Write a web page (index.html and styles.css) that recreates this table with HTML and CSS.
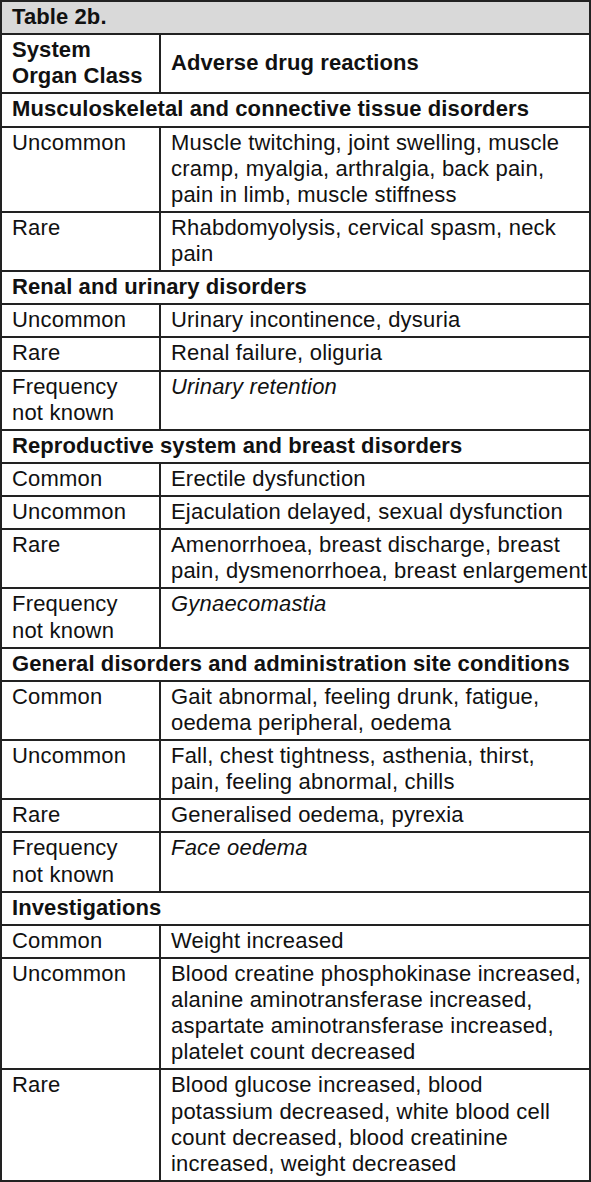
FILE: index.html
```html
<!DOCTYPE html>
<html>
<head>
<meta charset="utf-8">
<link rel="stylesheet" href="styles.css">
</head>
<body>
<table class="adr">
<colgroup><col class="c1"><col class="c2"></colgroup>
<tr class="title"><th colspan="2">Table 2b.</th></tr>
<tr class="head"><th class="cls">System Organ Class</th><th class="mid">Adverse drug reactions</th></tr>
<tr class="sec"><th colspan="2">Musculoskeletal and connective tissue disorders</th></tr>
<tr><td class="cls">Uncommon</td><td>Muscle twitching, joint swelling, muscle cramp, myalgia, arthralgia, back pain, pain in limb, muscle stiffness</td></tr>
<tr><td class="cls">Rare</td><td>Rhabdomyolysis, cervical spasm, neck pain</td></tr>
<tr class="sec"><th colspan="2">Renal and urinary disorders</th></tr>
<tr><td class="cls">Uncommon</td><td>Urinary incontinence, dysuria</td></tr>
<tr><td class="cls">Rare</td><td>Renal failure, oliguria</td></tr>
<tr><td class="cls">Frequency not known</td><td><em>Urinary retention</em></td></tr>
<tr class="sec"><th colspan="2">Reproductive system and breast disorders</th></tr>
<tr><td class="cls">Common</td><td>Erectile dysfunction</td></tr>
<tr><td class="cls">Uncommon</td><td>Ejaculation delayed, sexual dysfunction</td></tr>
<tr><td class="cls">Rare</td><td>Amenorrhoea, breast discharge, breast pain, dysmenorrhoea, breast enlargement</td></tr>
<tr><td class="cls">Frequency not known</td><td><em>Gynaecomastia</em></td></tr>
<tr class="sec"><th colspan="2">General disorders and administration site conditions</th></tr>
<tr><td class="cls">Common</td><td>Gait abnormal, feeling drunk, fatigue, oedema peripheral, oedema</td></tr>
<tr><td class="cls">Uncommon</td><td>Fall, chest tightness, asthenia, thirst, pain, feeling abnormal, chills</td></tr>
<tr><td class="cls">Rare</td><td>Generalised oedema, pyrexia</td></tr>
<tr><td class="cls">Frequency not known</td><td><em>Face oedema</em></td></tr>
<tr class="sec"><th colspan="2">Investigations</th></tr>
<tr><td class="cls">Common</td><td>Weight increased</td></tr>
<tr><td class="cls">Uncommon</td><td>Blood creatine phosphokinase increased, alanine aminotransferase increased, aspartate aminotransferase increased, platelet count decreased</td></tr>
<tr><td class="cls">Rare</td><td>Blood glucose increased, blood potassium decreased, white blood cell count decreased, blood creatinine increased, weight decreased</td></tr>
</table>
</body>
</html>
```
FILE: styles.css
```css
html, body {
  margin: 0;
  padding: 0;
  background: #ffffff;
}
.adr {
  border-collapse: collapse;
  width: 591px;
  table-layout: fixed;
  font-family: "Liberation Sans", Arial, sans-serif;
  font-size: 22px;
  line-height: 26.13px;
  color: #111;
  letter-spacing: 0.2px;
}
.c1 { width: 159px; }
.adr th, .adr td {
  border: 2px solid #222;
  padding: 2px 0 3px 10px;
  text-align: left;
  vertical-align: top;
  font-weight: normal;
}
.adr .cls {
  padding-right: 12px;
}
.adr th {
  font-weight: bold;
  letter-spacing: 0.1px;
}
.adr .head .mid {
  vertical-align: middle;
}
.adr .title th {
  background: #d9d9d9;
}
.adr em {
  font-style: italic;
}
```
